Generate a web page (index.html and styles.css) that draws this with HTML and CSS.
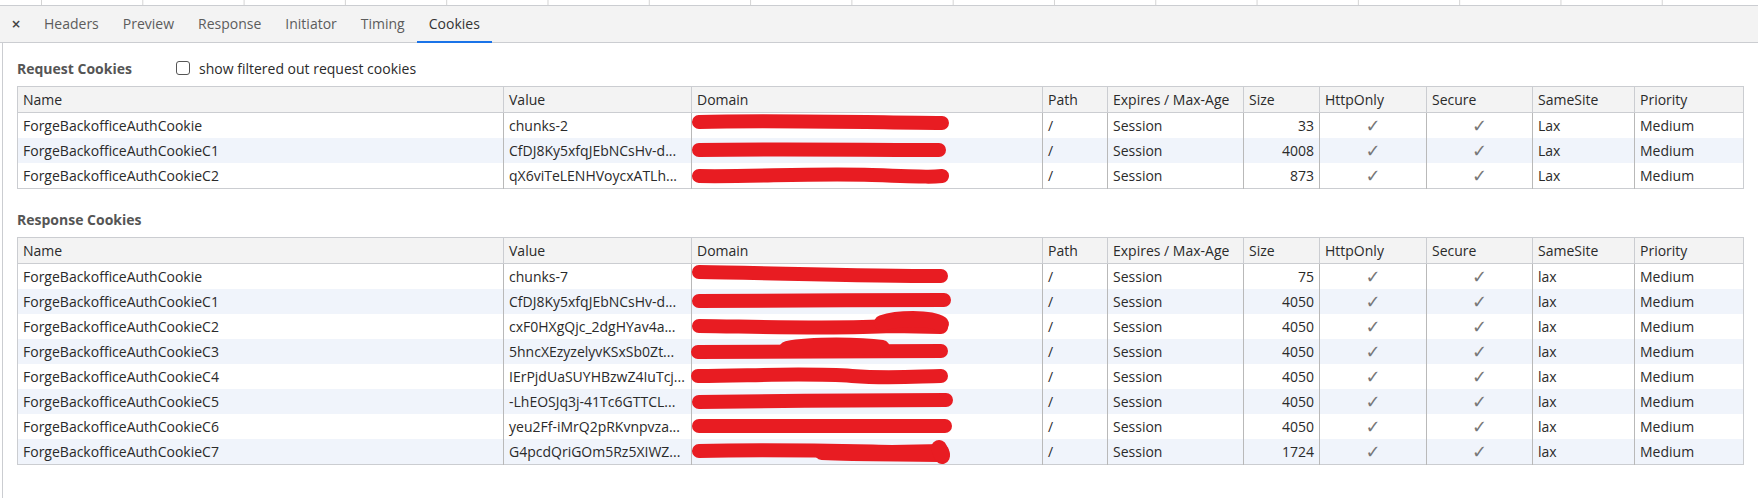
FILE: index.html
```html
<!DOCTYPE html>
<html lang="en">
<head>
<meta charset="utf-8">
<title>Cookies</title>
<link rel="stylesheet" href="styles.css">
</head>
<body>
<div class="top-strip"></div>
<div class="tabbar">
  <span class="close">×</span>
  <span class="tab">Headers</span>
  <span class="tab">Preview</span>
  <span class="tab">Response</span>
  <span class="tab">Initiator</span>
  <span class="tab">Timing</span>
  <span class="tab active">Cookies</span>
</div>
<div class="panel">
  <div class="section-head first">
    <h3 class="section-title">Request Cookies</h3>
    <label class="filter"><span class="cb"></span>show filtered out request cookies</label>
  </div>
  <table class="grid">
    <colgroup>
      <col class="c-name"><col class="c-value"><col class="c-domain"><col class="c-path"><col class="c-exp"><col class="c-size"><col class="c-http"><col class="c-sec"><col class="c-same"><col class="c-prio">
    </colgroup>
    <thead>
      <tr><th>Name</th><th>Value</th><th>Domain</th><th>Path</th><th>Expires / Max-Age</th><th>Size</th><th>HttpOnly</th><th>Secure</th><th>SameSite</th><th>Priority</th></tr>
    </thead>
    <tbody>
      <tr><td>ForgeBackofficeAuthCookie</td><td>chunks-2</td><td class="dom"><svg class="red" viewBox="0 0 270 25"><path d="M7,9 C70,7 160,9 250,10"/></svg></td><td>/</td><td>Session</td><td class="num">33</td><td class="chk">✓</td><td class="chk">✓</td><td>Lax</td><td>Medium</td></tr>
      <tr><td>ForgeBackofficeAuthCookieC1</td><td>CfDJ8Ky5xfqJEbNCsHv-d...</td><td class="dom"><svg class="red" viewBox="0 0 270 25"><path d="M7,12 C90,11 170,12 247,12"/></svg></td><td>/</td><td>Session</td><td class="num">4008</td><td class="chk">✓</td><td class="chk">✓</td><td>Lax</td><td>Medium</td></tr>
      <tr><td>ForgeBackofficeAuthCookieC2</td><td>qX6viTeLENHVoycxATLh...</td><td class="dom"><svg class="red" viewBox="0 0 270 25"><path d="M7,13 C60,14 120,10 180,12 S240,14 250,13"/></svg></td><td>/</td><td>Session</td><td class="num">873</td><td class="chk">✓</td><td class="chk">✓</td><td>Lax</td><td>Medium</td></tr>
    </tbody>
  </table>

  <div class="section-head">
    <h3 class="section-title">Response Cookies</h3>
  </div>
  <table class="grid">
    <colgroup>
      <col class="c-name"><col class="c-value"><col class="c-domain"><col class="c-path"><col class="c-exp"><col class="c-size"><col class="c-http"><col class="c-sec"><col class="c-same"><col class="c-prio">
    </colgroup>
    <thead>
      <tr><th>Name</th><th>Value</th><th>Domain</th><th>Path</th><th>Expires / Max-Age</th><th>Size</th><th>HttpOnly</th><th>Secure</th><th>SameSite</th><th>Priority</th></tr>
    </thead>
    <tbody>
      <tr><td>ForgeBackofficeAuthCookie</td><td>chunks-7</td><td class="dom"><svg class="red" viewBox="0 0 270 25"><path d="M7,8 C80,9 170,12 249,12"/></svg></td><td>/</td><td>Session</td><td class="num">75</td><td class="chk">✓</td><td class="chk">✓</td><td>lax</td><td>Medium</td></tr>
      <tr><td>ForgeBackofficeAuthCookieC1</td><td>CfDJ8Ky5xfqJEbNCsHv-d...</td><td class="dom"><svg class="red" viewBox="0 0 270 25"><path d="M7,12 C90,12 170,11 252,11"/></svg></td><td>/</td><td>Session</td><td class="num">4050</td><td class="chk">✓</td><td class="chk">✓</td><td>lax</td><td>Medium</td></tr>
      <tr><td>ForgeBackofficeAuthCookieC2</td><td>cxF0HXgQjc_2dgHYav4a...</td><td class="dom"><svg class="red" viewBox="0 0 270 25"><path d="M7,12 C80,13 150,15 200,12 L249,13"/><path class="blob" d="M190,9 C205,4 238,3 249,10"/></svg></td><td>/</td><td>Session</td><td class="num">4050</td><td class="chk">✓</td><td class="chk">✓</td><td>lax</td><td>Medium</td></tr>
      <tr><td>ForgeBackofficeAuthCookieC3</td><td>5hncXEzyzelyvKSxSb0Zt...</td><td class="dom"><svg class="red" viewBox="0 0 270 25"><path d="M6,13 C90,13 170,12 249,12"/><path class="blob" d="M95,10 C120,5 170,6 190,9"/></svg></td><td>/</td><td>Session</td><td class="num">4050</td><td class="chk">✓</td><td class="chk">✓</td><td>lax</td><td>Medium</td></tr>
      <tr><td>ForgeBackofficeAuthCookieC4</td><td>IErPjdUaSUYHBzwZ4IuTcj...</td><td class="dom"><svg class="red" viewBox="0 0 270 25"><path d="M6,12 C80,11 120,9 160,12 S230,12 249,12"/></svg></td><td>/</td><td>Session</td><td class="num">4050</td><td class="chk">✓</td><td class="chk">✓</td><td>lax</td><td>Medium</td></tr>
      <tr><td>ForgeBackofficeAuthCookieC5</td><td>-LhEOSJq3j-41Tc6GTTCL...</td><td class="dom"><svg class="red" viewBox="0 0 270 25"><path d="M7,13 C90,12 170,11 254,11"/></svg></td><td>/</td><td>Session</td><td class="num">4050</td><td class="chk">✓</td><td class="chk">✓</td><td>lax</td><td>Medium</td></tr>
      <tr><td>ForgeBackofficeAuthCookieC6</td><td>yeu2Ff-iMrQ2pRKvnpvza...</td><td class="dom"><svg class="red" viewBox="0 0 270 25"><path d="M7,12 C90,12 170,12 253,12"/></svg></td><td>/</td><td>Session</td><td class="num">4050</td><td class="chk">✓</td><td class="chk">✓</td><td>lax</td><td>Medium</td></tr>
      <tr><td>ForgeBackofficeAuthCookieC7</td><td>G4pcdQriGOm5Rz5XIWZ...</td><td class="dom"><svg class="red" viewBox="0 0 270 25"><path d="M7,12 C80,10 150,12 200,13 L250,12"/><path class="blob" d="M130,13 C170,15 220,14 250,15"/><path class="blob" d="M247,9 L250,17"/></svg></td><td>/</td><td>Session</td><td class="num">1724</td><td class="chk">✓</td><td class="chk">✓</td><td>lax</td><td>Medium</td></tr>
    </tbody>
  </table>
</div>
</body>
</html>
```
FILE: styles.css
```css
html, body {
  margin: 0;
  padding: 0;
  background: #ffffff;
}
body {
  width: 1758px;
  height: 498px;
  overflow: hidden;
  font-family: "Open Sans", "Noto Sans", sans-serif;
  font-size: 14px;
  color: #2a2a2a;
}
.top-strip {
  height: 5px;
  border-bottom: 1px solid #cbcdd1;
  background-image: linear-gradient(to right, #d4d4d4 1px, transparent 1px);
  background-size: 101.3px 100%;
  background-position: 41px 0;
}
.tabbar {
  display: flex;
  align-items: stretch;
  height: 36px;
  background: #f3f3f3;
  border-bottom: 1px solid #cbcdd1;
}
.close {
  width: 32px;
  display: flex;
  align-items: center;
  justify-content: center;
  font-size: 16px;
  font-weight: 600;
  color: #444;
}
.tab {
  display: flex;
  align-items: center;
  padding: 0 12px;
  color: #5c5c5c;
  white-space: nowrap;
  border-bottom: 2px solid transparent;
  margin-bottom: -1px;
}
.tab.active {
  color: #333;
  border-bottom-color: #1a73e8;
}
.panel {
  margin-left: 2px;
  border-left: 1px solid #cbcdd1;
  padding: 0 15px 0 14px;
  height: 455px;
}
.section-head {
  display: flex;
  align-items: center;
  height: 20px;
  padding: 20px 0 8px;
}
.section-head.first {
  padding: 15px 0 8px;
}
.section-title {
  margin: 0;
  width: 159px;
  font-size: 14px;
  font-weight: 700;
  color: #555;
}
.filter {
  display: flex;
  align-items: center;
  gap: 9px;
  color: #2a2a2a;
}
.cb {
  width: 12px;
  height: 12px;
  border: 1px solid #555;
  border-radius: 3px;
  background: #fff;
}
.grid {
  width: 100%;
  table-layout: fixed;
  border-collapse: collapse;
  border: 1px solid #cbcdd1;
}
.c-name { width: 486px; }
.c-value { width: 188px; }
.c-domain { width: 351px; }
.c-path { width: 65px; }
.c-exp { width: 136px; }
.c-size { width: 76px; }
.c-http { width: 107px; }
.c-sec { width: 106px; }
.c-same { width: 102px; }
.c-prio { width: 109px; }
.grid th {
  height: 25px;
  padding: 0 5px;
  background: #f3f3f3;
  border-left: 1px solid #cbcdd1;
  border-bottom: 1px solid #cbcdd1;
  text-align: left;
  font-weight: 400;
  color: #2a2a2a;
  white-space: nowrap;
  overflow: hidden;
}
.grid td {
  height: 25px;
  padding: 0 5px;
  border-left: 1px solid #b9b9b9;
  white-space: nowrap;
  overflow: hidden;
  vertical-align: middle;
  line-height: 18px;
}
.grid tbody tr:nth-child(even) td {
  background: #f0f4fb;
}
.grid td:first-child,
.grid th:first-child {
  border-left: none;
}
.grid td.num {
  text-align: right;
}
.grid td.chk {
  text-align: center;
  font-family: "DejaVu Sans", sans-serif;
  font-size: 18px;
  color: #777;
}
.grid td.dom {
  padding: 0;
  overflow: visible;
}
.red {
  display: block;
  width: 270px;
  height: 25px;
  overflow: visible;
}
.red path {
  fill: none;
  stroke: #e81c22;
  stroke-width: 14;
  stroke-linecap: round;
  stroke-linejoin: round;
}
.red path.blob {
  stroke-width: 16;
}
```
